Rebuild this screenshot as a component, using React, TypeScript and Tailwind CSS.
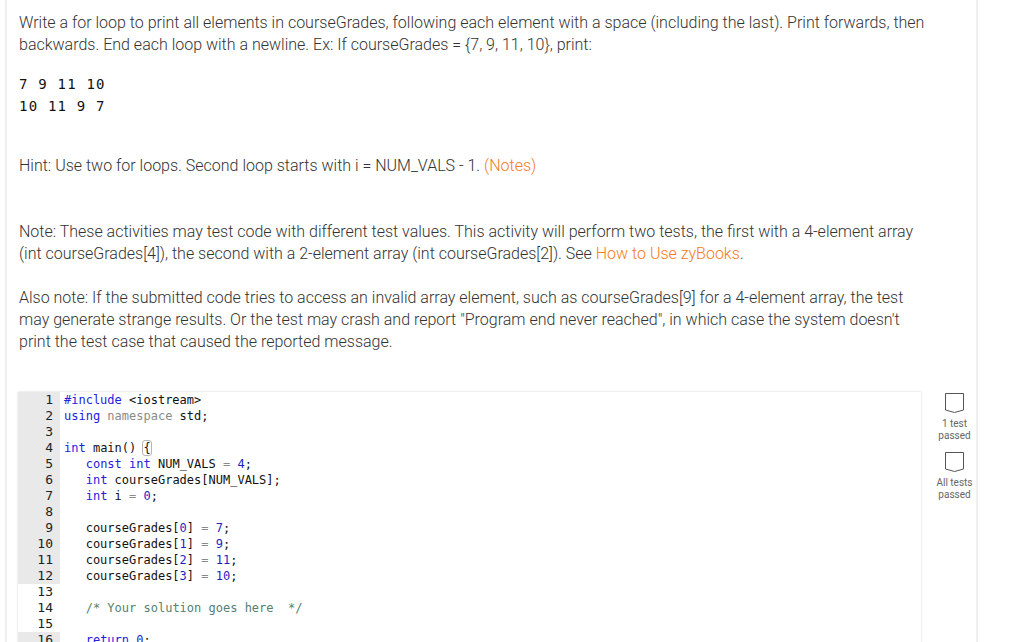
import React from 'react';

type Tok = { t: string; c?: string };

const KW = 'text-[#2222dd]';
const NUM = 'text-[#1f1fc0]';
const OP = 'text-[#8a8a8a]';
const GRAY = 'text-[#8a8a8a]';
const CMT = 'text-[#56806f]';

const lines: { toks: Tok[]; ro: boolean }[] = [
  { ro: true, toks: [{ t: '#include', c: KW }, { t: ' <iostream>' }] },
  { ro: true, toks: [{ t: 'using', c: KW }, { t: ' ' }, { t: 'namespace', c: GRAY }, { t: ' std;' }] },
  { ro: true, toks: [] },
  { ro: true, toks: [{ t: 'int', c: KW }, { t: ' main() ' }, { t: '{', c: 'brace' }] },
  { ro: true, toks: [{ t: '   ' }, { t: 'const', c: KW }, { t: ' ' }, { t: 'int', c: KW }, { t: ' NUM_VALS ' }, { t: '=', c: OP }, { t: ' ' }, { t: '4', c: NUM }, { t: ';' }] },
  { ro: true, toks: [{ t: '   ' }, { t: 'int', c: KW }, { t: ' courseGrades[NUM_VALS];' }] },
  { ro: true, toks: [{ t: '   ' }, { t: 'int', c: KW }, { t: ' i ' }, { t: '=', c: OP }, { t: ' ' }, { t: '0', c: NUM }, { t: ';' }] },
  { ro: true, toks: [] },
  { ro: true, toks: [{ t: '   courseGrades[' }, { t: '0', c: NUM }, { t: '] ' }, { t: '=', c: OP }, { t: ' ' }, { t: '7', c: NUM }, { t: ';' }] },
  { ro: true, toks: [{ t: '   courseGrades[' }, { t: '1', c: NUM }, { t: '] ' }, { t: '=', c: OP }, { t: ' ' }, { t: '9', c: NUM }, { t: ';' }] },
  { ro: true, toks: [{ t: '   courseGrades[' }, { t: '2', c: NUM }, { t: '] ' }, { t: '=', c: OP }, { t: ' ' }, { t: '11', c: NUM }, { t: ';' }] },
  { ro: true, toks: [{ t: '   courseGrades[' }, { t: '3', c: NUM }, { t: '] ' }, { t: '=', c: OP }, { t: ' ' }, { t: '10', c: NUM }, { t: ';' }] },
  { ro: false, toks: [] },
  { ro: false, toks: [{ t: '   ' }, { t: '/* Your solution goes here  */', c: CMT }] },
  { ro: false, toks: [] },
  { ro: true, toks: [{ t: '   ' }, { t: 'return', c: KW }, { t: ' ' }, { t: '0', c: NUM }, { t: ';' }] },
  { ro: true, toks: [{ t: '}' }] },
];

const Badge: React.FC<{ label: string[] }> = ({ label }) => (
  <div className="flex flex-col items-center">
    <svg width="21" height="22" viewBox="0 0 21 22">
      <path d="M1.5 1.5 H19.5 V18 L10.5 20.5 L1.5 18 Z" fill="none" stroke="#555" strokeWidth="1" />
    </svg>
    <div className="mt-[4px] text-[10px] leading-[12px] text-[#666] text-center">
      {label.map((l) => (
        <div key={l}>{l}</div>
      ))}
    </div>
  </div>
);

const App: React.FC = () => {
  return (
    <div className="h-[642px] w-[1024px] overflow-hidden bg-white flex font-['Roboto',sans-serif]">
      <div className="w-[5px] shrink-0" />
      <div className="w-[973px] shrink-0 border-l-2 border-r-2 border-[#efefef] pl-[12px] pt-[12px]">
        <div className="w-[916px] text-[16px] leading-[22px] text-[#333] font-light">
          <p>
            {'Write a for loop to print all elements in courseGrades, following each element with a space (including the last). Print forwards, then backwards. End each loop with a newline. Ex: If courseGrades = {7, 9, 11, 10}, print:'}
          </p>
          <pre className="mt-[17px] font-['DejaVu_Sans_Mono',monospace] text-[14px] leading-[22px] text-[#111] tracking-[1.2px]">
            {'7 9 11 10\n10 11 9 7'}
          </pre>
          <p className="mt-[38px]">
            Hint: Use two for loops. Second loop starts with i = NUM_VALS - 1.{' '}
            <span className="text-[#f47b20]">(Notes)</span>
          </p>
          <p className="mt-[44px]">
            Note: These activities may test code with different test values. This activity will perform two tests, the
            first with a 4-element array (int courseGrades[4]), the second with a 2-element array (int courseGrades[2]).
            See <span className="text-[#f47b20]">How to Use zyBooks</span>.
          </p>
          <p className="mt-[22px]">
            Also note: If the submitted code tries to access an invalid array element, such as courseGrades[9] for a
            4-element array, the test may generate strange results. Or the test may crash and report "Program end never
            reached", in which case the system doesn't print the test case that caused the reported message.
          </p>
        </div>

        <div className="mt-[39px] -ml-[1px] flex">
          <div className="w-[903px] shrink-0 bg-white shadow-[0_0_2px_rgba(0,0,0,0.18)] font-['DejaVu_Sans_Mono',monospace] text-[12px] leading-[16px] text-[#111]">
            {lines.map((ln, i) => (
              <div key={i} className="flex h-[16px]">
                <div
                  className={`w-[42px] shrink-0 pr-[7px] text-right text-[13px] text-[#222] ${ln.ro ? 'bg-[#e9e9e9]' : 'bg-white'}`}
                >
                  {i + 1}
                </div>
                <div className="pl-[4px] whitespace-pre">
                  {ln.toks.map((tk, j) =>
                    tk.c === 'brace' ? (
                      <span key={j} className="outline outline-1 outline-[#b5b5b5] rounded-[2px]">
                        {tk.t}
                      </span>
                    ) : (
                      <span key={j} className={tk.c}>
                        {tk.t}
                      </span>
                    )
                  )}
                </div>
              </div>
            ))}
          </div>
          <div className="flex-1 flex flex-col items-center gap-[9px] pl-[12px]">
            <Badge label={['1 test', 'passed']} />
            <Badge label={['All tests', 'passed']} />
          </div>
        </div>
      </div>
      <div className="flex-1" />
    </div>
  );
};

export default App;
